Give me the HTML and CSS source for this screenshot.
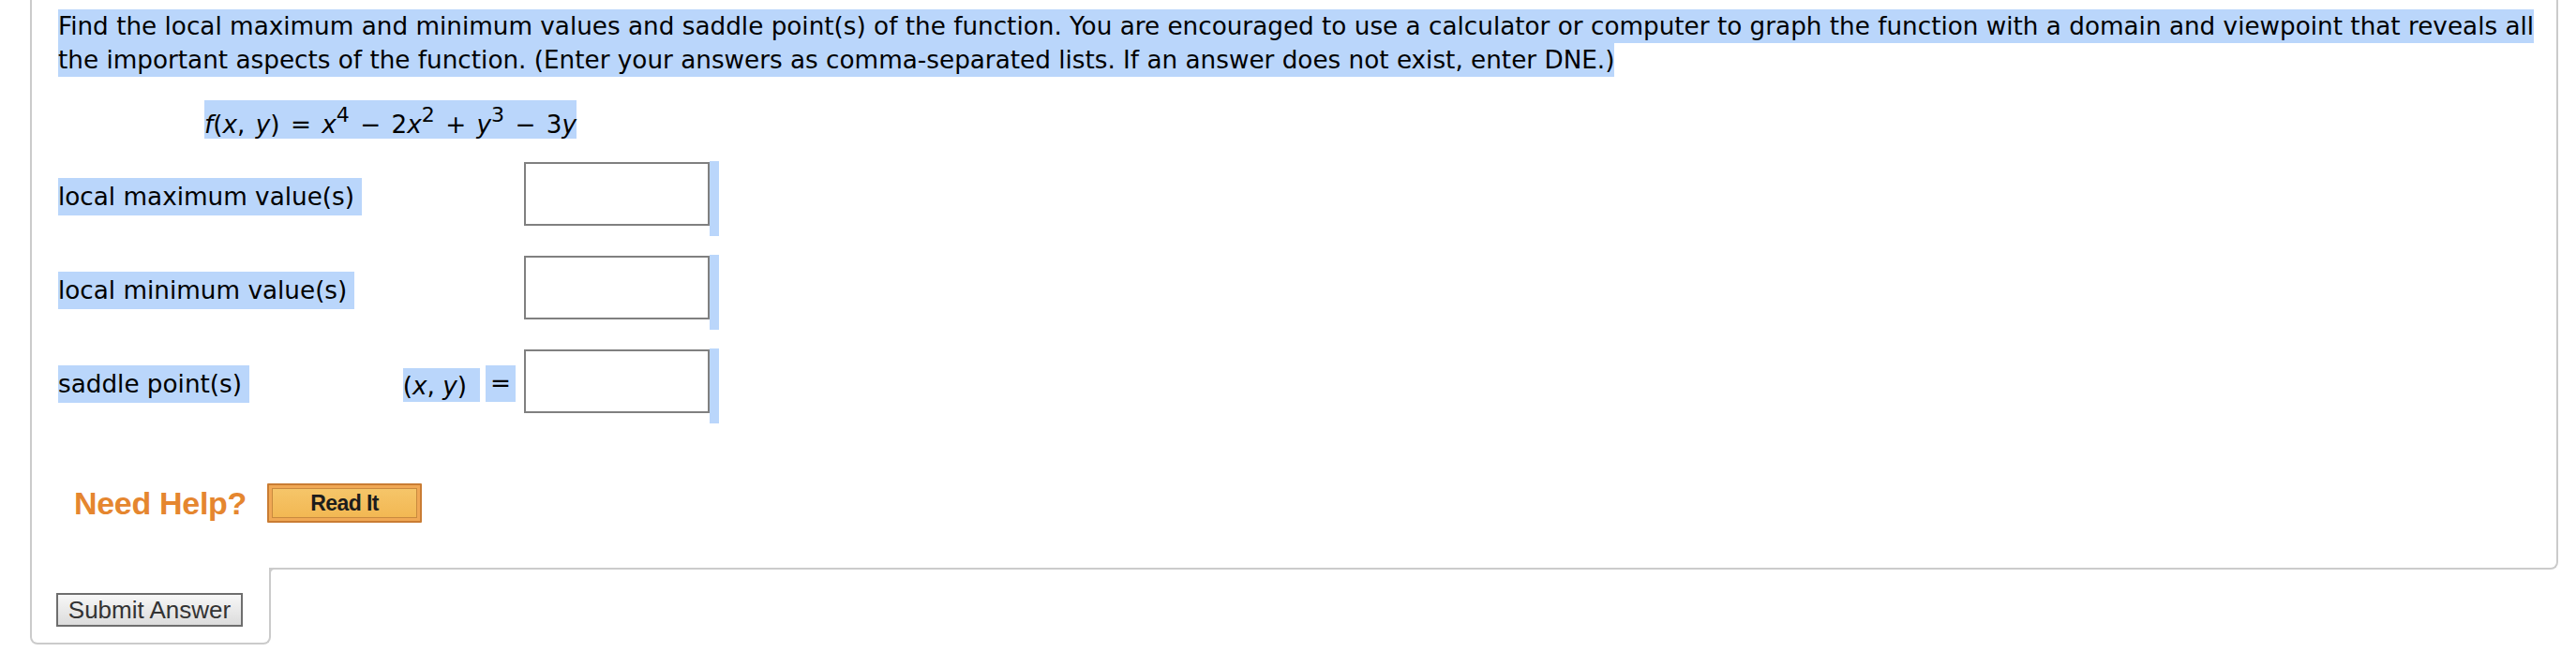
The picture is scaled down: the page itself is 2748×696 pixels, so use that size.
FILE: index.html
```html
<!DOCTYPE html>
<html lang="en">
<head>
<meta charset="utf-8" />
<title>Local extrema and saddle points</title>
<link rel="stylesheet" href="styles.css">
</head>
<body>
<div class="question">
  <p class="prompt"><span class="hl">Find the local maximum and minimum values and saddle point(s) of the function. You are encouraged to use a calculator or computer to graph the function with a domain and viewpoint that reveals all <br>the important aspects of the function. (Enter your answers as comma-separated lists. If an answer does not exist, enter DNE.)</span></p>
  <p class="equation"><span class="hl eq"><i>f</i>(<i>x</i>, <i>y</i>) = <i>x</i><sup>4</sup> &minus; 2<i>x</i><sup>2</sup> + <i>y</i><sup>3</sup> &minus; 3<i>y</i></span></p>

  <div class="answers">
    <div class="answer-row">
      <span class="label hl">local maximum value(s)</span>
      <span class="prefix"></span>
      <input class="answer" type="text">
      <span class="sel-tail"></span>
    </div>
    <div class="answer-row">
      <span class="label hl">local minimum value(s)</span>
      <span class="prefix"></span>
      <input class="answer" type="text">
      <span class="sel-tail"></span>
    </div>
    <div class="answer-row">
      <span class="label hl">saddle point(s)</span>
      <span class="prefix"><span class="pair hl">(<i>x</i>, <i>y</i>)</span><span class="eqsign hl">=</span></span>
      <input class="answer" type="text">
      <span class="sel-tail"></span>
    </div>
  </div>

  <div class="help">
    <span class="need-help">Need Help?</span>
    <button class="read-it">Read It</button>
  </div>
</div>
<div class="submit-tab">
  <button class="submit">Submit Answer</button>
</div>
</body>
</html>
```

FILE: styles.css
```css
body {
  margin:0; background:#fff; color:#000;
  font-family: "DejaVu Sans", Verdana, sans-serif;
}
.hl { background:#bad6fb; }

.question {
  margin:0 19px 0 32px;
  border:2px solid #cbcbcb; border-top:none;
  border-radius:0 0 8px 0;
  padding:10px 28px 48px 28px;
}
.prompt {
  margin:0; font-size:26.25px; line-height:36px; white-space:nowrap;
}
.prompt .hl { padding:2.7px 0; }

.equation {
  margin:25px 0 0 0; padding-left:156px; font-size:26.25px;
}
.eq {
  display:inline-block; line-height:30px; padding-top:11px; word-spacing:3px;
}
.eq sup { font-size:84%; line-height:0; vertical-align:12px; }

.answers { margin-top:24px; }
.answer-row {
  display:grid; grid-template-columns:370px 127px 198px 10px;
  align-items:start; height:80px; margin-bottom:20px;
  font-size:26.25px;
}
.answer-row:last-child { margin-bottom:0; }
.label {
  justify-self:start; display:inline-block;
  line-height:40px; margin-top:18px; padding-right:8px;
}
.prefix {
  display:flex; justify-content:flex-end; gap:6px; padding-right:9px;
  white-space:nowrap;
}
.pair {
  flex-shrink:0; display:inline-block;
  line-height:27px; padding:6px 14px 0 0; margin-top:21px;
}
.eqsign {
  flex-shrink:0; display:inline-block;
  line-height:39px; padding:0 5px; margin-top:18px;
}
.answer {
  box-sizing:border-box; width:198px; height:68px; margin:1px 0 0 0;
  border:2px solid #808080; background:#fff; padding:0 6px;
  font:inherit; outline:none;
}
.sel-tail { width:10px; height:80px; background:#bad6fb; }

.help {
  display:flex; align-items:center; gap:22px;
  margin-top:64px; padding-left:17px;
}
.need-help {
  font-family:"Liberation Sans", Arial, sans-serif; font-weight:700;
  font-size:34px; color:#e5862f; letter-spacing:-0.3px;
}
.read-it {
  width:165px; height:42px; padding:0;
  border:2px solid #c97c33; border-radius:1px;
  background:linear-gradient(#f6c76c,#f2b650);
  box-shadow:inset 0 0 0 3px #f0a855, inset 0 0 0 4px #c98a3e;
  font-family:"Liberation Sans", Arial, sans-serif; font-weight:700;
  font-size:23px; color:#1c1c1c; letter-spacing:-0.6px;
}

.submit-tab {
  position:relative;
  box-sizing:border-box; width:257px; margin:-2px 0 0 32px;
  background:#fff; border:2px solid #cbcbcb; border-top:none;
  border-radius:0 0 8px 8px;
  padding:27px 0 17px 26px;
}
/* rounded join where the tab meets the box bottom */
.submit-tab::before {
  content:""; position:absolute; top:0; right:-8px;
  width:8px; height:8px; background:#fff;
  border-top:2px solid #cbcbcb; border-left:2px solid #cbcbcb;
  border-top-left-radius:6px;
  box-sizing:border-box;
}
.submit {
  box-sizing:border-box; width:199px; height:36px; padding:0;
  border:2px solid #6e6e6e; border-radius:0;
  background:linear-gradient(#f7f7f7,#dcdcdc);
  font-family:"Liberation Sans", Arial, sans-serif; font-size:26px; color:#333;
}
```
